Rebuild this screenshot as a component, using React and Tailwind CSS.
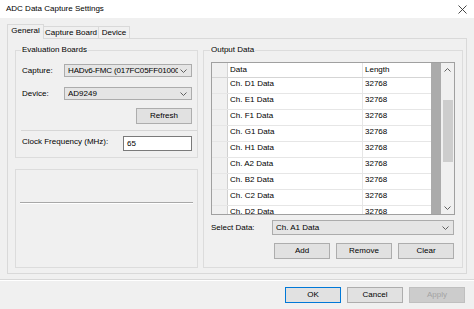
import React from 'react'

const rows = ['D1', 'E1', 'F1', 'G1', 'H1', 'A2', 'B2', 'C2', 'D2']

const Chevron = ({ up }) => (
  <svg width="7" height="4" viewBox="0 0 7 4" className="shrink-0">
    <path
      d={up ? 'M0.5 3.5 L3.5 0.5 L6.5 3.5' : 'M0.5 0.5 L3.5 3.5 L6.5 0.5'}
      fill="none"
      stroke="#606060"
      strokeWidth="1"
    />
  </svg>
)

function Combo({ value, className = '', textClass = '' }) {
  return (
    <div className={`shrink-0 flex items-center gap-[2px] border border-[#acacac] bg-[#e5e5e5] pl-[3px] pr-[4px] whitespace-nowrap overflow-hidden ${className}`}>
      <span className={`flex-1 min-w-0 overflow-hidden ${textClass}`}>{value}</span>
      <Chevron />
    </div>
  )
}

function Btn({ children, className = '' }) {
  return (
    <div className={`flex items-center justify-center border h-[16px] w-[56px] ${className || 'border-[#adadad] bg-[#e1e1e1]'}`}>
      {children}
    </div>
  )
}

export default function App() {
  return (
    <div className="w-[474px] h-[309px] overflow-hidden bg-[#f0f0f0] text-black text-[8px] leading-[10px] font-['Liberation_Sans',Arial,sans-serif] flex flex-col">
      {/* title bar */}
      <div className="h-[18px] shrink-0 bg-white flex items-center justify-between pl-[6px] pr-[7px]">
        <span>ADC Data Capture Settings</span>
        <svg width="9" height="9" viewBox="0 0 9 9">
          <path d="M0.5 0.5 L8.5 8.5 M8.5 0.5 L0.5 8.5" stroke="#333" strokeWidth="0.9" />
        </svg>
      </div>

      {/* tabs */}
      <div className="mt-[6px] ml-[7px] h-[14px] flex items-end relative z-10">
        <div className="h-[15px] -mb-px w-[37px] flex items-center justify-center border-l border-t border-r border-[#d9d9d9] bg-[#f0f0f0] pb-[2px]">
          General
        </div>
        <div className="h-[12px] w-[55px] flex items-center justify-center border-t border-r border-[#d9d9d9] bg-[#f0f0f0]">
          Capture Board
        </div>
        <div className="h-[12px] w-[31px] flex items-center justify-center border-t border-r border-[#d9d9d9] bg-[#f0f0f0]">
          Device
        </div>
      </div>

      {/* tab page */}
      <div className="ml-[7px] w-[460px] h-[236px] shrink-0 border border-[#d9d9d9] flex gap-[5px] pl-[7px] pt-[6px]">
        {/* left column */}
        <div className="w-[183px] flex flex-col">
          <fieldset className="h-[113px] border border-[#dcdcdc] pl-[5px] pr-[3px]">
            <legend className="px-[1px] leading-[10px]">Evaluation Boards</legend>
            <div className="mt-[9px] flex items-center">
              <span className="w-[43px] shrink-0 pl-[1px]">Capture:</span>
              <Combo value="HADv6-FMC (017FC05FF01000" className="w-[128px] h-[13px]" textClass="tracking-[-0.15px]" />
            </div>
            <div className="mt-[10px] flex items-center">
              <span className="w-[43px] shrink-0 pl-[1px]">Device:</span>
              <Combo value="AD9249" className="w-[128px] h-[13px]" />
            </div>
            <div className="mt-[8px] flex justify-end pr-[2px]">
              <Btn>Refresh</Btn>
            </div>
            <div className="mt-[6px] h-px bg-[#d6d6d6] -mr-[3px]" />
            <div className="mt-[5px] flex items-start">
              <span className="w-[102px] shrink-0 pl-[1px] pt-[1px]">Clock Frequency (MHz):</span>
              <div className="w-[69px] h-[15px] border border-[#7a7a7a] bg-white pl-[3px] flex items-center">65</div>
            </div>
          </fieldset>

          <div className="mt-[11px] h-[99px] border border-[#dcdcdc] px-[4px]">
            <div className="mt-[32px] border-t border-[#a8a8a8] border-b border-b-white" />
          </div>
        </div>

        {/* right column */}
        <fieldset className="w-[260px] h-[223px] border border-[#dcdcdc] pl-[6px]">
          <legend className="px-[1px] leading-[10px]">Output Data</legend>

          <div className="ml-[1px] mt-[7px] w-[244px] h-[153px] border border-[#a0a0a0] flex overflow-hidden">
            <div className="w-[219px] flex flex-col bg-white">
              <div className="h-[15px] shrink-0 flex border-b border-[#d5d5d5]">
                <div className="w-[16px] bg-[#f0f0f0] border-r border-[#d5d5d5]" />
                <div className="w-[135px] pl-[2px] pt-[2px] border-r border-[#e5e5e5]">Data</div>
                <div className="flex-1 pl-[2px] pt-[2px]">Length</div>
              </div>
              {rows.map(r => (
                <div key={r} className="h-[16px] shrink-0 flex border-b border-[#e6e6e6]">
                  <div className="w-[16px] bg-[#f0f0f0] border-r border-[#d0d0d0]" />
                  <div className="w-[135px] pl-[2px] pt-[1px] border-r border-[#e6e6e6]">Ch. {r} Data</div>
                  <div className="flex-1 pl-[2px] pt-[1px]">32768</div>
                </div>
              ))}
            </div>
            <div className="w-[10px] bg-[#ababab]" />
            <div className="w-[13px] bg-[#f0f0f0] flex flex-col items-center">
              <div className="h-[13px] flex items-center justify-center">
                <Chevron up />
              </div>
              <div className="mt-[24px] w-[10px] h-[62px] bg-[#cdcdcd]" />
              <div className="flex-1" />
              <div className="h-[13px] flex items-center justify-center">
                <Chevron />
              </div>
            </div>
          </div>

          <div className="mt-[5px] flex items-center">
            <span className="w-[62px] shrink-0 pl-[1px]">Select Data:</span>
            <Combo value="Ch. A1 Data" className="w-[182px] h-[15px]" />
          </div>
          <div className="mt-[8px] ml-[64px] flex gap-[6px]">
            <Btn>Add</Btn>
            <Btn>Remove</Btn>
            <Btn>Clear</Btn>
          </div>
        </fieldset>
      </div>

      {/* separator + footer */}
      <div className="mt-[5px] h-px bg-[#d8d8d8]" />
      <div className="h-px bg-white" />
      <div className="mt-[6px] flex justify-end gap-[6px] pr-[9px]">
        <Btn className="border-[#0078d7] bg-[#e1e1e1]">OK</Btn>
        <Btn>Cancel</Btn>
        <Btn className="border-[#bfbfbf] bg-[#cccccc] text-[#a3a3a3]">Apply</Btn>
      </div>
    </div>
  )
}
